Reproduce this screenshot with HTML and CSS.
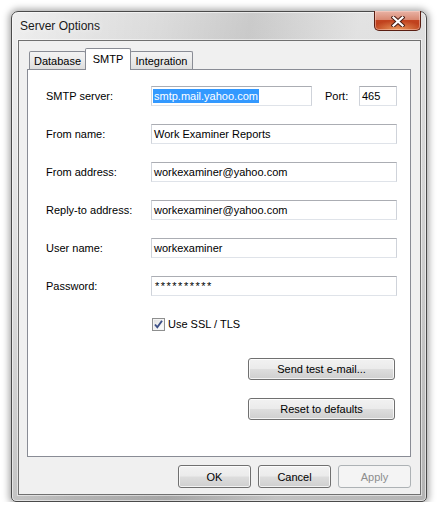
FILE: index.html
```html
<!DOCTYPE html>
<html lang="en">
<head>
<meta charset="utf-8">
<title>Server Options</title>
<link rel="stylesheet" href="styles.css">
</head>
<body>
<div class="window">
  <div class="titlebar">
    <span class="title">Server Options</span>
    <button class="close" type="button" aria-label="Close">
      <svg width="14" height="11" viewBox="0 0 14 11">
        <path d="M2.5 1.5 L11.5 9.5 M11.5 1.5 L2.5 9.5" stroke="#4a1e14" stroke-width="4.2" stroke-linecap="square" fill="none"/>
        <path d="M2.5 1.5 L11.5 9.5 M11.5 1.5 L2.5 9.5" stroke="#ffffff" stroke-width="2.2" stroke-linecap="square" fill="none"/>
      </svg>
    </button>
  </div>
  <div class="client">
    <div class="tabs">
      <div class="tab tab-db">Database</div>
      <div class="tab tab-smtp active">SMTP</div>
      <div class="tab tab-int">Integration</div>
    </div>
    <div class="panel">
      <div class="form">
        <div class="row">
          <label class="lbl">SMTP server:</label>
          <div class="ctl">
            <div class="field server"><span class="sel">smtp.mail.yahoo.com</span></div>
            <label class="lbl port-lbl">Port:</label>
            <div class="field port">465</div>
          </div>
        </div>
        <div class="row">
          <label class="lbl">From name:</label>
          <div class="field wide">Work Examiner Reports</div>
        </div>
        <div class="row">
          <label class="lbl">From address:</label>
          <div class="field wide">workexaminer@yahoo.com</div>
        </div>
        <div class="row">
          <label class="lbl">Reply-to address:</label>
          <div class="field wide">workexaminer@yahoo.com</div>
        </div>
        <div class="row">
          <label class="lbl">User name:</label>
          <div class="field wide">workexaminer</div>
        </div>
        <div class="row">
          <label class="lbl">Password:</label>
          <div class="field wide pw">**********</div>
        </div>
        <div class="row check-row">
          <span class="lbl"></span>
          <label class="check">
            <span class="box">
              <svg width="11" height="11" viewBox="0 0 11 11">
                <path d="M2 5.5 L4.3 8.3 L9 1.8" stroke="#3c4f86" stroke-width="1.9" fill="none" stroke-linejoin="miter"/>
              </svg>
            </span>
            Use SSL / TLS
          </label>
        </div>
      </div>
      <div class="actions">
        <button class="btn action" type="button">Send test e-mail...</button>
        <button class="btn action" type="button">Reset to defaults</button>
      </div>
    </div>
    <div class="footer">
      <button class="btn" type="button">OK</button>
      <button class="btn" type="button">Cancel</button>
      <button class="btn disabled" type="button">Apply</button>
    </div>
  </div>
</div>
</body>
</html>
```

FILE: styles.css
```css
* {
  box-sizing: border-box;
}

body {
  margin: 0;
  background: #ffffff;
  font-family: "Liberation Sans", Arial, sans-serif;
  font-size: 11px;
  color: #000000;
}

/* window frame */
.window {
  margin: 11px 0 0 11px;
  width: 416px;
  height: 491px;
  border: 1px solid #4a4a4a;
  border-radius: 7px 7px 5px 5px;
  background:
    linear-gradient(100deg, rgba(255,255,255,0.55) 0%, rgba(255,255,255,0) 30%, rgba(0,0,0,0.08) 48%, rgba(255,255,255,0.2) 70%, rgba(255,255,255,0) 100%),
    linear-gradient(180deg, #dcdcdc 0%, #cfcfcf 40%, #b3b3b3 100%);
  box-shadow: 0 0 7px 2px rgba(0, 0, 0, 0.35), inset 0 0 0 1px rgba(255, 255, 255, 0.55);
  display: flex;
  flex-direction: column;
}

.titlebar {
  height: 28px;
  display: flex;
  align-items: flex-start;
  padding: 0 5px 0 8px;
}

.title {
  font-size: 12px;
  line-height: 12px;
  margin-top: 8px;
  color: #1a1a1a;
  text-shadow: 0 0 6px rgba(255, 255, 255, 0.9);
}

.close {
  margin-left: auto;
  width: 47px;
  height: 20px;
  margin-top: -1px;
  padding: 0;
  border: 1px solid #5a1e12;
  border-top: none;
  border-radius: 0 0 5px 5px;
  background:
    radial-gradient(ellipse 60% 50% at 50% 100%, rgba(255, 190, 120, 0.75), rgba(255, 190, 120, 0) 100%),
    linear-gradient(180deg, #e9b3a6 0%, #d98a74 45%, #c2431f 50%, #b83a17 100%);
  box-shadow: inset 0 0 0 1px rgba(255, 220, 210, 0.45);
  display: flex;
  align-items: center;
  justify-content: center;
}

.close svg {
  display: block;
  margin-top: 1px;
}

/* client area */
.client {
  flex: 1;
  margin: 0 5px 6px 6px;
  border: 1px solid #707070;
  box-shadow: 0 0 0 1px rgba(255, 255, 255, 0.5);
  background: #f0f0f0;
  padding: 7px 9px 6px 8px;
  display: flex;
  flex-direction: column;
}

.tabs {
  display: flex;
  align-items: flex-end;
  height: 22px;
  margin: 0 0 -1px 2px;
  position: relative;
  z-index: 1;
}

.tab {
  height: 18px;
  margin-bottom: 1px;
  border: 1px solid #898c95;
  border-bottom: none;
  border-radius: 2px 2px 0 0;
  background: linear-gradient(180deg, #f3f3f3 0%, #ebebeb 50%, #dedede 100%);
  display: flex;
  align-items: center;
  justify-content: center;
  padding-top: 1px;
}

.tab-db {
  width: 57px;
}

.tab-smtp {
  width: 46px;
  margin-left: -1px;
}

.tab-int {
  width: 63px;
  margin-left: -1px;
}

.tab.active {
  height: 22px;
  margin-bottom: 0;
  background: #ffffff;
  padding-top: 0;
  padding-bottom: 2px;
  position: relative;
  z-index: 2;
}

.panel {
  height: 388px;
  width: 384px;
  border: 1px solid #898c95;
  background: #ffffff;
  padding: 16px 13px 0 18px;
}

.form {
  display: flex;
  flex-direction: column;
  gap: 18px;
}

.row {
  display: flex;
  align-items: center;
  height: 20px;
}

.lbl {
  width: 105px;
  flex: none;
}

.ctl {
  display: flex;
  align-items: center;
  flex: 1;
}

.field {
  height: 20px;
  border: 1px solid;
  border-color: #abadb3 #cfd3da #dfe3e9 #cfd3da;
  background: #ffffff;
  padding: 0 2px;
  line-height: 18px;
  white-space: nowrap;
  overflow: hidden;
}

.wide {
  flex: 1;
}

.server {
  width: 161px;
  padding-left: 1px;
}

.sel {
  background: #3399ff;
  color: #ffffff;
  padding: 1px 1px 1px 1px;
}

.port-lbl {
  width: auto;
  margin-left: 13px;
}

.port {
  width: 38px;
  margin-left: auto;
}

.pw {
  letter-spacing: 1.5px;
  padding-left: 3px;
}

.check-row {
  margin-top: 3px;
  height: 14px;
}

.check {
  display: flex;
  align-items: center;
  gap: 3px;
  margin-left: 1px;
}

.box {
  width: 13px;
  height: 13px;
  border: 1px solid #8e8f8f;
  background: linear-gradient(135deg, #dcdcdc 0%, #f4f4f4 60%, #ffffff 100%);
  box-shadow: inset 0 0 0 1px #f4f4f4;
  display: flex;
  align-items: center;
  justify-content: center;
}

.box svg {
  display: block;
}

.actions {
  display: flex;
  flex-direction: column;
  align-items: flex-end;
  gap: 18px;
  margin-top: 27px;
  padding-right: 2px;
}

/* push buttons */
.btn {
  font-family: "Liberation Sans", Arial, sans-serif;
  font-size: 11px;
  color: #000000;
  height: 23px;
  width: 73px;
  padding: 0;
  border: 1px solid #707070;
  border-radius: 3px;
  background: linear-gradient(180deg, #f2f2f2 0%, #ebebeb 48%, #dddddd 52%, #cfcfcf 100%);
  box-shadow: inset 0 0 0 1px rgba(255, 255, 255, 0.75);
}

.btn.action {
  width: 147px;
  height: 22px;
}

.btn.disabled {
  color: #8d8d8d;
  border-color: #adb2b5;
  background: #f4f4f4;
  box-shadow: none;
}

.footer {
  display: flex;
  justify-content: flex-end;
  gap: 7px;
  margin-top: 8px;
}
```
